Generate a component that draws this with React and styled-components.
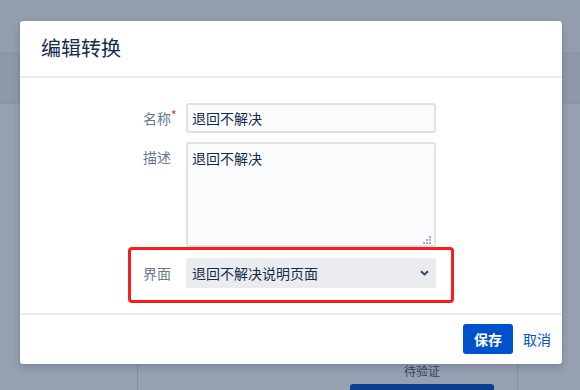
import React from "react";
import styled, { createGlobalStyle } from "styled-components";

const GlobalStyle = createGlobalStyle`
  html, body {
    margin: 0;
    padding: 0;
  }
  body {
    font-family: "Noto Sans CJK SC", "Liberation Sans", sans-serif;
    font-size: 14px;
    color: #172b4d;
  }
  * {
    box-sizing: border-box;
  }
`;

const Page = styled.div`
  position: relative;
  width: 580px;
  height: 390px;
  overflow: hidden;
  display: flex;
  flex-direction: column;
  background: #97a0b0;
`;

const TopBar = styled.div`
  height: 53px;
  flex-shrink: 0;
  background: #959eae;
  border-bottom: 1px solid #8b94a4;
`;

const SubBar = styled.div`
  height: 51px;
  flex-shrink: 0;
  background: #8f98a8;
  border-bottom: 1px solid #8b94a4;
`;

const Content = styled.div`
  flex: 1;
  display: flex;
  padding-left: 137px;
`;

const Panel = styled.div`
  width: 381px;
  border-left: 1px solid #858e9e;
  border-right: 1px solid #858e9e;
  display: flex;
  flex-direction: column;
  align-items: flex-end;
  padding: 259px 23px 0 0;
`;

const StatusColumn = styled.div`
  width: 144px;
  display: flex;
  flex-direction: column;
  align-items: center;
  gap: 5px;
`;

const StatusText = styled.div`
  font-size: 12px;
  line-height: 16px;
  color: #39435a;
`;

const StatusButton = styled.div`
  width: 144px;
  height: 32px;
  border-radius: 3px;
  background: #0d3f8e;
`;

const Modal = styled.div`
  position: absolute;
  top: 21px;
  left: 20px;
  width: 542px;
  height: 343px;
  background: #fff;
  border-radius: 3px;
  box-shadow: 0 3px 8px rgba(9, 30, 66, 0.2), 0 0 1px rgba(9, 30, 66, 0.3);
  display: flex;
  flex-direction: column;
`;

const Header = styled.div`
  height: 57px;
  padding: 0 21px 2px;
  display: flex;
  align-items: center;
  border-bottom: 2px solid #ebecf0;
`;

const Title = styled.h2`
  margin: 0;
  font-size: 20px;
  font-weight: 400;
  line-height: 24px;
  color: #172b4d;
`;

const Body = styled.div`
  flex: 1;
  display: flex;
  flex-direction: column;
  align-items: flex-start;
  padding-top: 25px;
`;

const Row = styled.div`
  position: relative;
  display: grid;
  grid-template-columns: 151px 250px;
  column-gap: 15px;
  margin-bottom: ${(p) => p.$gap || 0}px;
`;

const Label = styled.label`
  position: relative;
  justify-self: end;
  align-self: start;
  line-height: 30px;
  font-size: 14px;
  color: #6b778c;
`;

const Required = styled.span`
  position: absolute;
  left: 100%;
  top: -3px;
  font-size: 12px;
  color: #de350b;
`;

const TextInput = styled.input`
  width: 250px;
  height: 30px;
  padding: 0 6px 0 4px;
  border: 2px solid #dfe1e6;
  border-radius: 3px;
  background: #fafbfc;
  font: inherit;
  font-size: 14px;
  color: #172b4d;
  outline: none;
`;

const AreaWrap = styled.div`
  position: relative;
  width: 250px;
  height: 105px;
`;

const TextArea = styled.textarea`
  display: block;
  width: 100%;
  height: 100%;
  resize: none;
  padding: 4px 6px 4px 4px;
  border: 2px solid #dfe1e6;
  border-radius: 3px;
  background: #fafbfc;
  font: inherit;
  font-size: 14px;
  line-height: 20px;
  color: #172b4d;
  outline: none;
`;

const Grip = styled.svg`
  position: absolute;
  right: 5px;
  bottom: 3px;
`;

const SelectBox = styled.div`
  width: 250px;
  height: 30px;
  padding: 0 7px 0 6px;
  display: flex;
  align-items: center;
  justify-content: space-between;
  border-radius: 3px;
  background: #ebecf0;
  font-size: 14px;
  color: #172b4d;
`;

const Highlight = styled.div`
  position: absolute;
  left: 108px;
  right: -18px;
  top: -11px;
  bottom: -15px;
  border: 3px solid #fa1d1d;
  border-radius: 4px;
  pointer-events: none;
`;

const Footer = styled.div`
  height: 51px;
  border-top: 2px solid #ebecf0;
  display: flex;
  align-items: center;
  justify-content: flex-end;
  padding: 0 1px 2px 0;
`;

const Button = styled.button`
  height: 30px;
  padding: 0 ${(p) => (p.$primary ? 11 : 10)}px;
  border: none;
  border-radius: 3px;
  font-family: inherit;
  font-size: 14px;
  font-weight: ${(p) => (p.$primary ? 700 : 400)};
  background: ${(p) => (p.$primary ? "#0052cc" : "transparent")};
  color: ${(p) => (p.$primary ? "#fff" : "#0052cc")};
  cursor: pointer;
`;

function ResizeGrip() {
  const dots = [
    [6, 0],
    [3, 3],
    [6, 3],
    [0, 6],
    [3, 6],
    [6, 6],
  ];
  return (
    <Grip width="8" height="8" viewBox="0 0 8 8">
      {dots.map(([x, y], i) => (
        <rect key={i} x={x} y={y} width="2" height="2" fill="#a5adba" />
      ))}
    </Grip>
  );
}

function Chevron() {
  return (
    <svg width="9" height="6" viewBox="0 0 9 6">
      <path
        d="M1 1.2 L4.5 4.5 L8 1.2"
        fill="none"
        stroke="#344563"
        strokeWidth="2"
      />
    </svg>
  );
}

export default function App() {
  return (
    <>
      <GlobalStyle />
      <Page>
        <TopBar />
        <SubBar />
        <Content>
          <Panel>
            <StatusColumn>
              <StatusText>待验证</StatusText>
              <StatusButton />
            </StatusColumn>
          </Panel>
        </Content>

        <Modal>
          <Header>
            <Title>编辑转换</Title>
          </Header>
          <Body>
            <Row $gap={9}>
              <Label>
                名称
                <Required>*</Required>
              </Label>
              <TextInput defaultValue="退回不解决" />
            </Row>
            <Row $gap={11}>
              <Label>描述</Label>
              <AreaWrap>
                <TextArea defaultValue="退回不解决" />
                <ResizeGrip />
              </AreaWrap>
            </Row>
            <Row>
              <Label>界面</Label>
              <SelectBox>
                <span>退回不解决说明页面</span>
                <Chevron />
              </SelectBox>
              <Highlight />
            </Row>
          </Body>
          <Footer>
            <Button $primary>保存</Button>
            <Button>取消</Button>
          </Footer>
        </Modal>
      </Page>
    </>
  );
}
